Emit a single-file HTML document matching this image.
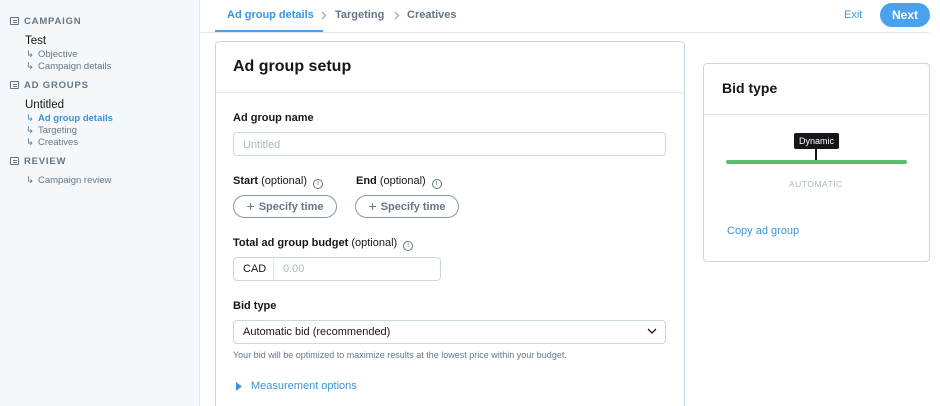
<!DOCTYPE html>
<html style="width:940px;height:406px;overflow:hidden"><head><style>
*{box-sizing:border-box;margin:0;padding:0}
body{width:940px;height:406px;overflow:hidden;background:#fff;font-family:"Liberation Sans",sans-serif;position:relative;color:#14171a}
.a{position:absolute;white-space:nowrap}
#side{position:absolute;left:0;top:0;width:200px;height:406px;background:#f5f8fa;border-right:1px solid #e1e8ed}
.sec{font-size:9.5px;font-weight:bold;letter-spacing:.8px;color:#657786}
.ic{position:absolute;width:9px;height:8px;border:1.5px solid #657786;border-radius:1px}
.ic:after{content:"";position:absolute;left:2px;top:1.5px;width:4px;height:1px;background:#657786;box-shadow:0 2px 0 #657786}
.nm{font-size:11.5px;color:#14171a}
.sub{font-size:9.5px;color:#657786}
.sub b{font-weight:normal;margin-right:4px}
.blue{color:#3b94d9}
.lbl{font-size:11px;font-weight:bold;color:#14171a}
.lbl span{font-weight:normal}
.inf{display:inline-block;width:10px;height:10px;border:1px solid #657786;border-radius:50%;font-size:7px;text-align:center;line-height:8px;color:#657786;font-weight:normal;font-style:normal;margin-left:6px;vertical-align:-1px}
.box{position:absolute;border:1px solid #ccd6dd;border-radius:4px;background:#fff}
.btn{position:absolute;border:1px solid #8899a6;border-radius:12px;font-size:11px;font-weight:bold;color:#657786;text-align:center;line-height:21px}
.btn i{font-style:normal;font-weight:normal;font-size:14px;margin-right:4px;vertical-align:-1px}
.tab{font-size:11px;font-weight:bold;color:#657786}
</style></head><body>
<div id="side">
<div class="ic" style="left:10px;top:17px"></div><div class="a sec" style="left:24px;top:16px">CAMPAIGN</div>
<div class="a nm" style="left:25px;top:35px">Test</div>
<div class="a sub" style="left:26px;top:49px"><b>↳</b>Objective</div>
<div class="a sub" style="left:26px;top:61px"><b>↳</b>Campaign details</div>
<div class="ic" style="left:10px;top:81px"></div><div class="a sec" style="left:24px;top:80px">AD GROUPS</div>
<div class="a nm" style="left:25px;top:99px">Untitled</div>
<div class="a sub blue" style="left:26px;top:113px;font-weight:bold"><b>↳</b>Ad group details</div>
<div class="a sub" style="left:26px;top:125px"><b>↳</b>Targeting</div>
<div class="a sub" style="left:26px;top:137px"><b>↳</b>Creatives</div>
<div class="ic" style="left:10px;top:157px"></div><div class="a sec" style="left:24px;top:156px">REVIEW</div>
<div class="a sub" style="left:26px;top:175px"><b>↳</b>Campaign review</div>
</div>
<div class="a" style="left:200px;top:32px;width:729px;height:1px;background:#e1e8ed"></div>
<div class="a" style="left:215px;top:30px;width:108px;height:2px;background:#4a9fe8"></div>
<div class="a tab" style="left:227px;top:9px;color:#3b94d9">Ad group details</div>
<svg class="a" style="left:321px;top:11px" width="6" height="9"><path d="M1 1l3.5 3.5L1 8" stroke="#8899a6" fill="none"/></svg>
<div class="a tab" style="left:335px;top:9px">Targeting</div>
<svg class="a" style="left:394px;top:11px" width="6" height="9"><path d="M1 1l3.5 3.5L1 8" stroke="#8899a6" fill="none"/></svg>
<div class="a tab" style="left:407px;top:9px">Creatives</div>
<div class="a" style="left:844px;top:9px;font-size:11px;color:#3b94d9">Exit</div>
<div class="a" style="left:880px;top:3px;width:50px;height:24px;border-radius:12px;background:#4aa1ec;color:#fff;font-size:12px;font-weight:bold;text-align:center;line-height:24px">Next</div>

<div class="box" style="left:215px;top:41px;width:470px;height:370px">
<div style="height:51px;border-bottom:1px solid #e1e8ed"></div></div>
<div class="a" style="left:233px;top:58px;font-size:16px;font-weight:bold">Ad group setup</div>
<div class="a lbl" style="left:233px;top:112px">Ad group name</div>
<div class="box" style="left:233px;top:132px;width:433px;height:24px;font-size:11px;color:#aab8c2;padding:6px 9px">Untitled</div>
<div class="a lbl" style="left:233px;top:175px">Start <span>(optional)</span><i class="inf">i</i></div>
<div class="a lbl" style="left:356px;top:175px">End <span>(optional)</span><i class="inf">i</i></div>
<div class="btn" style="left:233px;top:195px;width:104px;height:23px"><i>+</i>Specify time</div>
<div class="btn" style="left:355px;top:195px;width:104px;height:23px"><i>+</i>Specify time</div>
<div class="a lbl" style="left:233px;top:237px">Total ad group budget <span>(optional)</span><i class="inf">i</i></div>
<div class="box" style="left:233px;top:257px;width:208px;height:24px"><div style="position:absolute;left:39px;top:0;width:1px;height:22px;background:#e1e8ed"></div></div>
<div class="a" style="left:243px;top:263px;font-size:11px">CAD</div>
<div class="a" style="left:283px;top:263px;font-size:11px;color:#aab8c2">0.00</div>
<div class="a lbl" style="left:233px;top:300px">Bid type</div>
<div class="box" style="left:233px;top:320px;width:433px;height:24px"></div>
<div class="a" style="left:243px;top:326px;font-size:11px">Automatic bid (recommended)</div>
<svg class="a" style="left:647px;top:327px" width="10" height="8"><path d="M1 2l4 4 4-4" stroke="#14171a" stroke-width="1.3" fill="none"/></svg>
<div class="a" style="left:233px;top:350px;font-size:9px;color:#657786">Your bid will be optimized to maximize results at the lowest price within your budget.</div>
<svg class="a" style="left:236px;top:382px" width="6" height="9"><path d="M0 0l6 4.5L0 9z" fill="#3b94d9"/></svg>
<div class="a" style="left:251px;top:380px;font-size:11px;color:#3b94d9">Measurement options</div>

<div class="box" style="left:703px;top:63px;width:227px;height:199px"><div style="height:51px;border-bottom:1px solid #e1e8ed"></div></div>
<div class="a" style="left:722px;top:80px;font-size:14px;font-weight:bold">Bid type</div>
<div class="a" style="left:794px;top:133px;width:45px;height:16px;background:#14171a;border-radius:2px;color:#fff;font-size:9px;text-align:center;line-height:16px">Dynamic</div>
<div class="a" style="left:815px;top:149px;width:2px;height:12px;background:#14171a"></div>
<div class="a" style="left:726px;top:160px;width:181px;height:4px;border-radius:2px;background:#58bf6a"></div>
<div class="a" style="left:789px;top:179px;font-size:8.5px;letter-spacing:.5px;color:#aab8c2">AUTOMATIC</div>
<div class="a" style="left:727px;top:225px;font-size:11px;color:#3b94d9">Copy ad group</div>
</body></html>
